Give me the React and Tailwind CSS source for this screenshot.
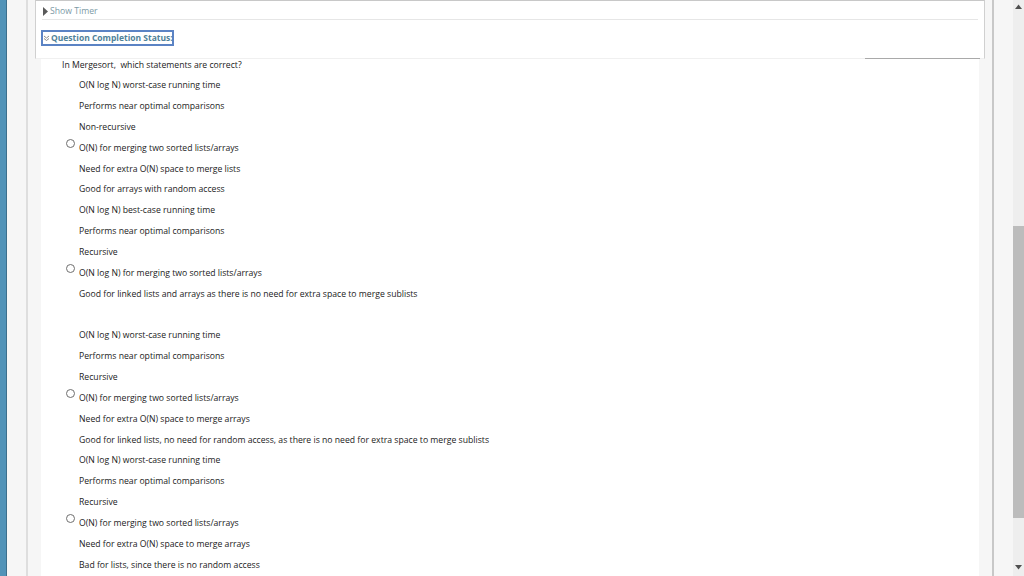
const rows = [
  ["O(N log N) worst-case running time", "Performs near optimal comparisons", "Non-recursive", "O(N) for merging two sorted lists/arrays", "Need for extra O(N) space to merge lists", "Good for arrays with random access"],
  ["O(N log N) best-case running time", "Performs near optimal comparisons", "Recursive", "O(N log N) for merging two sorted lists/arrays", "Good for linked lists and arrays as there is no need for extra space to merge sublists"],
  ["O(N log N) worst-case running time", "Performs near optimal comparisons", "Recursive", "O(N) for merging two sorted lists/arrays", "Need for extra O(N) space to merge arrays", "Good for linked lists, no need for random access, as there is no need for extra space to merge sublists"],
  ["O(N log N) worst-case running time", "Performs near optimal comparisons", "Recursive", "O(N) for merging two sorted lists/arrays", "Need for extra O(N) space to merge arrays", "Bad for lists, since there is no random access"],
];

function Option({ lines, extra }) {
  return (
    <div className={extra ? "flex flex-col pb-[21px]" : "flex flex-col"}>
      {lines.map((t, i) => (
        <div key={i} className="relative h-[20.84px] pl-[79px] leading-[20.84px] whitespace-nowrap">
          {i === 3 && (
            <span className="absolute left-[66px] top-[1px] h-[9px] w-[9px] rounded-full border border-[#6f6f6f] bg-white" />
          )}
          {t}
        </div>
      ))}
    </div>
  );
}

export default function App() {
  return (
    <div className="relative flex h-[576px] w-[1024px] overflow-hidden bg-[#f6f6f6] font-['Open_Sans',sans-serif] text-[8.67px] text-[#222]">
      <div className="w-[7px] shrink-0 border-r border-[#3d6f8c] bg-[#5293b8]" />
      <div className="w-[21px] shrink-0 border-r-2 border-[#dedede]" />
      <div className="w-[13px] shrink-0" />
      <main className="w-[938px] shrink-0 bg-white pt-[75.3px]">
        <div className="-ml-[41px]">
          <Option lines={rows[0]} />
          <Option lines={rows[1]} extra />
          <Option lines={rows[2]} />
          <Option lines={rows[3]} />
        </div>
      </main>
      <div className="w-[13px] shrink-0" />
      <div className="w-[21px] shrink-0 border-l-2 border-[#c8c8c8]" />
      <div className="flex w-[11px] shrink-0 flex-col items-center bg-[#eeeeee]">
        <svg width="7" height="5" viewBox="0 0 7 5" className="mt-[4px]"><path d="M3.5 0.5 L7 5 H0 Z" fill="#505050" /></svg>
        <div className="mt-[217px] h-[292px] w-full bg-[#bcbcbc]" />
        <svg width="7" height="5" viewBox="0 0 7 5" className="mt-[47px]"><path d="M0 0 H7 L3.5 4.5 Z" fill="#505050" /></svg>
      </div>

      <div className="absolute left-[35px] top-0 h-[59px] w-[950px] border-x border-t border-b border-x-[#d0d0d0] border-t-[#c8c8c8] border-b-[#f0f0f0] bg-white px-[6px]">
        <div className="flex h-[19px] items-center gap-[2px] border-b border-[#e6e6e6] pt-[2px] text-[#7c9aa6]">
          <svg width="6" height="9" viewBox="0 0 6 9"><path d="M1 0 L6 4.5 L1 9 Z" fill="#5a5a5a" /></svg>
          <span>Show Timer</span>
        </div>
        <div className="-ml-px mt-[10px] flex h-[16px] w-[133px] items-center gap-[2px] border-2 border-[#5b83c4] pl-[1px] font-bold text-[8.5px] text-[#4f8299]">
          <svg width="5" height="6" viewBox="0 0 5 6" className="shrink-0"><path d="M0 1 L2.5 3 L5 1 M0 3.5 L2.5 5.5 L5 3.5" fill="none" stroke="#8a8a8a" strokeWidth="1" /></svg>
          <span className="whitespace-nowrap">Question Completion Status:</span>
        </div>
        <div className="absolute -bottom-px right-[4px] h-px w-[115px] bg-[#a9a9a9]" />
      </div>
      <div className="absolute left-[62px] top-[58px] leading-[14px]">In Mergesort,&nbsp; which statements are correct?</div>
    </div>
  );
}
